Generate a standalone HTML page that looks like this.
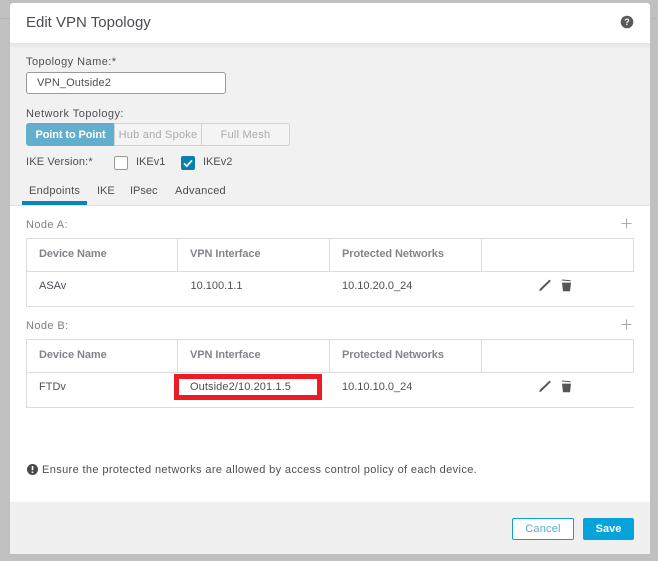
<!DOCTYPE html>
<html><head><meta charset="utf-8">
<style>
html,body{margin:0;padding:0;width:658px;height:561px;overflow:hidden;background:#c0c0c0}
*{box-sizing:border-box}
body{position:relative;font-family:"Liberation Sans",Arial,sans-serif;font-size:11px;color:#4c4f54}
.a{position:absolute;white-space:nowrap}
.line{position:absolute;background:#dcdcdc}
.th{font-weight:bold;color:#82858a;letter-spacing:-.08px}
.seg{position:absolute;top:123px;height:23px;line-height:22px;text-align:center;border:1px solid #d2d2d2;background:#f4f4f4;color:#a9abad;letter-spacing:.22px}
</style></head><body>
<div class="a" style="left:0;top:18px;width:10px;height:1px;background:#b4b4b4"></div>
<div class="a" style="left:650px;top:18px;width:8px;height:1px;background:#b4b4b4"></div>
<div class="a" style="left:10px;top:3px;width:640px;height:551px;background:#fff;border-radius:3px 3px 0 0"></div>
<div class="a" style="left:10px;top:43px;width:640px;height:162px;background:#f1f1f1"></div>
<div class="a" style="left:10px;top:43px;width:640px;height:6px;background:linear-gradient(#e2e2e2,#f1f1f1)"></div>
<div class="a" style="left:10px;top:205px;width:640px;height:1px;background:#e2e2e2"></div>
<div class="a" style="left:10px;top:502px;width:640px;height:52px;background:#f0f0f0"></div>

<div class="a" style="left:26px;top:14px;font-size:15px;line-height:18px;color:#4a4d52">Edit VPN Topology</div>
<svg class="a" style="left:620px;top:15px" width="14" height="14" viewBox="0 0 14 14"><circle cx="7" cy="7" r="6.3" fill="#58595b"/><text x="7" y="10.2" font-family="Liberation Sans" font-size="9" font-weight="bold" text-anchor="middle" fill="#fff">?</text></svg>

<div class="a" style="left:26px;top:56px;line-height:13px;letter-spacing:.45px">Topology Name:*</div>
<div class="a" style="left:26px;top:72px;width:200px;height:22px;background:#fff;border:1px solid #9a9a9a;border-radius:3px;line-height:20px;padding-left:10px;letter-spacing:.1px">VPN_Outside2</div>
<div class="a" style="left:26px;top:108px;line-height:13px;letter-spacing:.45px">Network Topology:</div>
<div class="seg" style="left:26px;width:89px;background:#62aecd;border-color:#62aecd;color:#fff;font-weight:bold;border-radius:3px 0 0 3px;letter-spacing:-.1px">Point to Point</div>
<div class="seg" style="left:114px;width:88px">Hub and Spoke</div>
<div class="seg" style="left:201px;width:89px;border-radius:0 3px 3px 0">Full Mesh</div>

<div class="a" style="left:26px;top:156px;line-height:13px;letter-spacing:.15px">IKE Version:*</div>
<div class="a" style="left:114px;top:156px;width:14px;height:14px;background:#fff;border:1px solid #9a9a9a;border-radius:2px"></div>
<div class="a" style="left:136px;top:156px;line-height:13px">IKEv1</div>
<svg class="a" style="left:181px;top:156px" width="14" height="14" viewBox="0 0 14 14"><rect width="14" height="14" rx="2" fill="#0a7fae"/><path d="M3 7.3l2.8 2.8L11 4.4" fill="none" stroke="#fff" stroke-width="1.7"/></svg>
<div class="a" style="left:203px;top:156px;line-height:13px">IKEv2</div>

<div class="a" style="left:29px;top:185px;line-height:13px;letter-spacing:.25px">Endpoints</div>
<div class="a" style="left:97px;top:185px;line-height:13px">IKE</div>
<div class="a" style="left:130px;top:185px;line-height:13px">IPsec</div>
<div class="a" style="left:175px;top:185px;line-height:13px;letter-spacing:.25px">Advanced</div>
<div class="a" style="left:22px;top:201px;width:65px;height:4px;background:#0a85b5"></div>

<!-- Node A -->
<div class="a" style="left:26px;top:219px;line-height:13px;color:#7d8084;letter-spacing:.4px">Node A:</div>
<svg class="a" style="left:621px;top:218px" width="11" height="11" viewBox="0 0 11 11"><path d="M5.5 0.5v10M0.5 5.5h10" stroke="#aaa" stroke-width="1"/></svg>
<div class="line" style="left:26px;top:238px;width:608px;height:1px"></div>
<div class="line" style="left:26px;top:271px;width:608px;height:1px"></div>
<div class="line" style="left:26px;top:306px;width:608px;height:1px"></div>
<div class="line" style="left:26px;top:238px;width:1px;height:69px"></div>
<div class="line" style="left:633px;top:238px;width:1px;height:34px"></div>
<div class="line" style="left:177px;top:238px;width:1px;height:34px"></div>
<div class="line" style="left:329px;top:238px;width:1px;height:34px"></div>
<div class="line" style="left:481px;top:238px;width:1px;height:34px"></div>
<div class="a th" style="left:39px;top:248px;line-height:13px">Device Name</div>
<div class="a th" style="left:190px;top:248px;line-height:13px">VPN Interface</div>
<div class="a th" style="left:342px;top:248px;line-height:13px">Protected Networks</div>
<div class="a" style="left:39px;top:280px;line-height:13px">ASAv</div>
<div class="a" style="left:190.5px;top:280px;line-height:13px">10.100.1.1</div>
<div class="a" style="left:342px;top:280px;line-height:13px">10.10.20.0_24</div>
<svg class="a" style="left:538px;top:279px" width="14" height="13" viewBox="0 0 14 13"><path d="M1.2 12.2l.6-2.2L11.5.6l1.4 1.3L3.3 11.4z" fill="#55565a"/></svg>
<svg class="a" style="left:561px;top:279px" width="11" height="13" viewBox="0 0 11 13"><path d="M1 1l8.6.8" stroke="#55565a" stroke-width="1" fill="none"/><path d="M1 3.6h9L9 12.3H2z" fill="#55565a"/></svg>

<!-- Node B -->
<div class="a" style="left:26px;top:320px;line-height:13px;color:#7d8084;letter-spacing:.4px">Node B:</div>
<svg class="a" style="left:621px;top:319px" width="11" height="11" viewBox="0 0 11 11"><path d="M5.5 0.5v10M0.5 5.5h10" stroke="#aaa" stroke-width="1"/></svg>
<div class="line" style="left:26px;top:339px;width:608px;height:1px"></div>
<div class="line" style="left:26px;top:372px;width:608px;height:1px"></div>
<div class="line" style="left:26px;top:407px;width:608px;height:1px"></div>
<div class="line" style="left:26px;top:339px;width:1px;height:69px"></div>
<div class="line" style="left:633px;top:339px;width:1px;height:34px"></div>
<div class="line" style="left:177px;top:339px;width:1px;height:34px"></div>
<div class="line" style="left:329px;top:339px;width:1px;height:34px"></div>
<div class="line" style="left:481px;top:339px;width:1px;height:34px"></div>
<div class="a th" style="left:39px;top:349px;line-height:13px">Device Name</div>
<div class="a th" style="left:190px;top:349px;line-height:13px">VPN Interface</div>
<div class="a th" style="left:342px;top:349px;line-height:13px">Protected Networks</div>
<div class="a" style="left:39px;top:381px;line-height:13px">FTDv</div>
<div class="a" style="left:174px;top:374px;width:148px;height:26px;border:5px solid #ed1c24;background:#fff"></div>
<div class="a" style="left:190px;top:381px;line-height:13px;letter-spacing:.1px">Outside2/10.201.1.5</div>
<div class="a" style="left:342px;top:381px;line-height:13px">10.10.10.0_24</div>
<svg class="a" style="left:538px;top:380px" width="14" height="13" viewBox="0 0 14 13"><path d="M1.2 12.2l.6-2.2L11.5.6l1.4 1.3L3.3 11.4z" fill="#55565a"/></svg>
<svg class="a" style="left:561px;top:380px" width="11" height="13" viewBox="0 0 11 13"><path d="M1 1l8.6.8" stroke="#55565a" stroke-width="1" fill="none"/><path d="M1 3.6h9L9 12.3H2z" fill="#55565a"/></svg>

<svg class="a" style="left:27px;top:464px" width="11" height="11" viewBox="0 0 11 11"><circle cx="5.5" cy="5.5" r="5.5" fill="#46484b"/><path d="M5.5 2v4.2" stroke="#fff" stroke-width="1.6"/><path d="M5.5 7.5v1.5" stroke="#fff" stroke-width="1.6"/></svg>
<div class="a" style="left:42px;top:464px;line-height:13px;letter-spacing:.37px">Ensure the protected networks are allowed by access control policy of each device.</div>

<div class="a" style="left:512px;top:518px;width:62px;height:22px;background:#fff;border:1px solid #0f9fd8;border-radius:2px;text-align:center;line-height:20px;color:#5aa9d6;letter-spacing:.2px">Cancel</div>
<div class="a" style="left:583px;top:518px;width:51px;height:22px;background:#04a3da;border-radius:2px;text-align:center;line-height:22px;color:#fff;font-weight:bold">Save</div>
</body></html>
